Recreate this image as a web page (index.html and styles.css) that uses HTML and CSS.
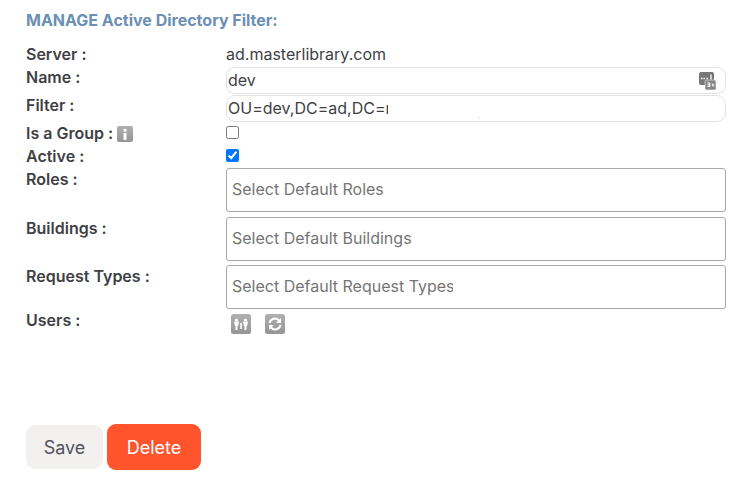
FILE: index.html
```html
<!DOCTYPE html>
<html>
<head>
<meta name="viewport" content="width=device-width, initial-scale=1">
<link rel="stylesheet" href="styles.css">
</head>
<body>

<h1 class="title">MANAGE Active Directory Filter:</h1>

<div class="form">
  <div class="row row-server">
    <label class="label">Server :</label>
    <div class="value">ad.masterlibrary.com</div>
  </div>
  <div class="row row-input">
    <label class="label">Name :</label>
    <div class="field">
      <input type="text" class="text-input" value="dev">
      <svg class="field-icon" width="17" height="18" viewBox="0 0 17 18">
        <rect x="0" y="0" width="15" height="13" rx="2" fill="#777"/>
        <rect x="6" y="8" width="11" height="10" rx="1.5" fill="#888" stroke="#fff" stroke-width="0.5"/>
        <path d="M2 6.500h1.500M4.500 6.500H6M7.500 6.500H9" stroke="#fff" stroke-width="1.3"/>
        <path d="M12 2.500v5" stroke="#fff" stroke-width="1.300"/>
        <path d="M8.500 11h2.300v3.500h-2.300M8.500 12.800h2.300M14 11.500v3M12.800 13h2.400" stroke="#fff" stroke-width="1" fill="none"/>
      </svg>
    </div>
  </div>
  <div class="row row-input">
    <label class="label">Filter :</label>
    <div class="field">
      <input type="text" class="text-input" value="OU=dev,DC=ad,DC=masterlibrary,DC=com">
      <div class="redact"></div>
    </div>
  </div>
  <div class="row row-group">
    <label class="label">Is a Group :
      <svg class="info-icon" width="16" height="16" viewBox="0 0 16 16">
        <rect width="16" height="16" rx="2" fill="url(#grey)"/>
        <rect x="6.500" y="3" width="3" height="2.500" fill="#fff"/>
        <rect x="6.500" y="7" width="3" height="7" fill="#fff"/>
      </svg>
    </label>
    <div class="value"><input type="checkbox" class="check"></div>
  </div>
  <div class="row row-active">
    <label class="label">Active :</label>
    <div class="value"><input type="checkbox" class="check" checked></div>
  </div>
  <div class="row row-select">
    <label class="label">Roles :</label>
    <div class="select-box"><input type="text" class="select-input" placeholder="Select Default Roles"></div>
  </div>
  <div class="row row-select">
    <label class="label">Buildings :</label>
    <div class="select-box"><input type="text" class="select-input" placeholder="Select Default Buildings"></div>
  </div>
  <div class="row row-select">
    <label class="label">Request Types :</label>
    <div class="select-box"><input type="text" class="select-input" placeholder="Select Default Request Types"></div>
  </div>
  <div class="row row-users">
    <label class="label">Users :</label>
    <div class="icons">
      <svg width="20" height="20" viewBox="0 0 20 20">
        <defs>
          <linearGradient id="grey" x1="0" y1="0" x2="0" y2="1">
            <stop offset="0" stop-color="#b0b0b0"/>
            <stop offset="1" stop-color="#959595"/>
          </linearGradient>
        </defs>
        <rect width="20" height="20" rx="2.500" fill="url(#grey)"/>
        <g fill="#fff">
          <circle cx="5.500" cy="6" r="1.600"/>
          <path d="M3 7.500h5l-.9 4.500h-.6v4h-2v-4h-.6z"/>
          <circle cx="14.500" cy="6" r="1.600"/>
          <path d="M12 7.500h5l-.9 4.500h-.6v4h-2v-4h-.6z"/>
          <path d="M9.200 9h1.600v6H9.200z"/>
        </g>
      </svg>
      <svg width="20" height="20" viewBox="0 0 20 20">
        <rect width="20" height="20" rx="2.500" fill="url(#grey)"/>
        <g fill="none" stroke="#fff" stroke-width="2">
          <path d="M4.500 9a5.500 5.500 0 0 1 9.500-2.500"/>
          <path d="M15.500 11a5.500 5.500 0 0 1-9.500 2.500"/>
        </g>
        <path d="M16 4v5h-5zM4 16v-5h5z" fill="#fff"/>
      </svg>
    </div>
  </div>
</div>

<div class="buttons">
  <button class="button button-save">Save</button>
  <button class="button button-delete">Delete</button>
</div>

</body>
</html>
```

FILE: styles.css
```css
body {
  margin: 0;
  padding: 0 6px 0 26px;
  font-family: Inter, "Liberation Sans", sans-serif;
  font-size: 16px;
  color: #3f3f46;
  background: #fff;
}

.title {
  margin: 0;
  padding-top: 12px;
  height: 33px;
  font-size: 16px;
  line-height: 17px;
  font-weight: 700;
  color: #6b8fb5;
}

.row {
  display: grid;
  grid-template-columns: 200px 1fr;
  align-items: start;
}

.label {
  font-size: 16px;
  font-weight: 600;
  line-height: 18px;
  color: #3f3f46;
}

.row-server {
  height: 22px;
}

.row-server .value {
  line-height: 18px;
}

.row-input {
  height: 28px;
}

.row-input .label {
  padding-top: 1px;
}

.field {
  position: relative;
}

.text-input {
  display: block;
  box-sizing: border-box;
  width: 500px;
  height: 27px;
  margin: 0;
  padding: 0 1px 2px;
  border: 1px solid #e2e2e2;
  border-radius: 9px;
  outline: none;
  font-family: inherit;
  font-size: 16px;
  color: #3f3f46;
}

.field-icon {
  position: absolute;
  top: 5px;
  right: 10px;
}

.redact {
  position: absolute;
  left: 162px;
  top: 2px;
  width: 200px;
  height: 20px;
  background: #fff;
}

.row-group {
  height: 23px;
}

.row-group .label {
  padding-top: 1px;
}

.info-icon {
  vertical-align: -3px;
}

.row-active {
  height: 22px;
}

.row-active .label {
  padding-top: 1px;
}

.check {
  display: block;
  width: 13px;
  height: 13px;
  margin: 3px 0 0;
}

.row-select {
  height: 48.5px;
}

.row-select .label {
  padding-top: 2px;
}

.select-box {
  box-sizing: border-box;
  width: 500px;
  height: 44px;
  padding: 0 5px 2px;
  display: flex;
  align-items: center;
  border: 1px solid #a8a8a8;
  border-radius: 3px;
}

.select-input {
  width: 221px;
  padding: 0;
  border: none;
  outline: none;
  font-family: inherit;
  font-size: 16px;
}

.select-input::placeholder {
  color: #757575;
}

.row-users {
  margin-top: -2.5px;
}

.icons {
  display: flex;
  gap: 14px;
  padding: 3px 0 0 5px;
}

.buttons {
  display: flex;
  align-items: center;
  gap: 4px;
  margin-top: 90px;
}

.button {
  border: none;
  font-family: inherit;
  font-size: 18px;
  cursor: pointer;
}

.button-save {
  width: 77px;
  height: 44px;
  border-radius: 9px;
  background: #f2f1f0;
  color: #52525b;
}

.button-delete {
  width: 94px;
  height: 46px;
  border-radius: 9px;
  background: #ff542c;
  color: #fff;
}
```
